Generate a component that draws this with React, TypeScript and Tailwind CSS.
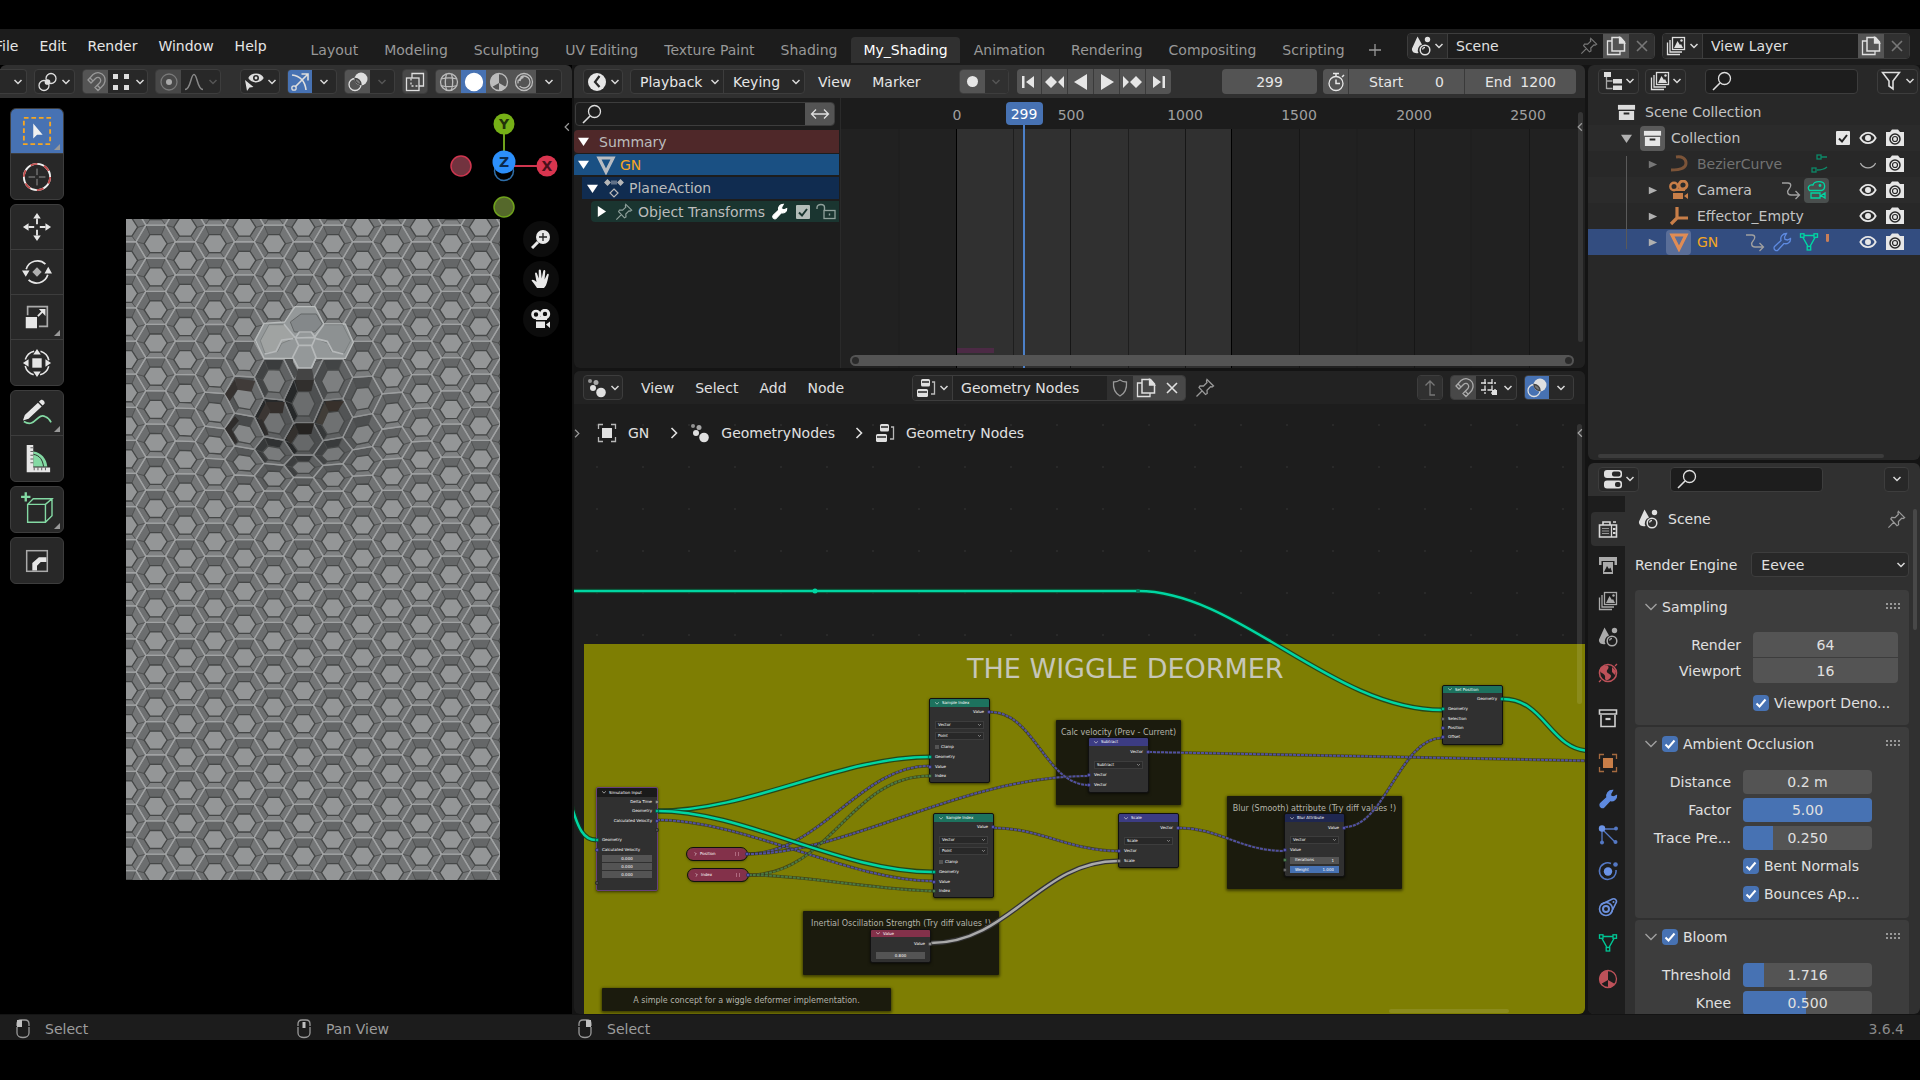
import React from "react";

interface IconProps {
    className?: string;
}

const Svg: React.FC<IconProps & { children: React.ReactNode }> = ({ className = "size-5", children }) => (
    <svg viewBox="0 0 20 20" fill="none" stroke="currentColor" strokeWidth="1.3" className={`shrink-0 ${className}`}>
        {children}
    </svg>
);

/* ---------- Icons ---------- */

const Chevron = ({ className = "text-[#d9d9d9]" }: IconProps) => (
    <svg viewBox="0 0 10 6" fill="none" stroke="currentColor" strokeWidth="1.5" className={`h-[6px] w-[10px] shrink-0 ${className}`}>
        <path d="M1.5 1l3.5 3.5L8.5 1" />
    </svg>
);
const Angle = ({ className = "h-3 w-2" }: IconProps) => (
    <svg viewBox="0 0 8 12" fill="none" stroke="currentColor" strokeWidth="1.6" className={`shrink-0 ${className}`}>
        <path d="M1.5 1l5 5-5 5" />
    </svg>
);
const SearchIcon = () => (
    <Svg>
        <circle cx="12.5" cy="7.5" r="6" />
        <path d="M8 12l-7 7" strokeWidth="1.6" />
    </Svg>
);
const PinIcon = ({ className }: IconProps) => (
    <Svg className={className}>
        <path d="M12 1.5l6.5 6.5-1.5 1-1.5-.3-3.5 3.5.2 3.3-1.7 1L4 9.500l1-1.700 3.500.2L12 4.500l-.5-1.500zM7 13l-5.500 5.500" />
    </Svg>
);
const CopyIcon = () => (
    <Svg>
        <path d="M6 5H1.500v13.500H14V15" />
        <path d="M6 1.500h8.500L18.500 6v9H6z" strokeWidth="1.500" />
        <path d="M13.500 1.500v5.500h5z" fill="currentColor" />
    </Svg>
);
const CrossIcon = () => (
    <Svg>
        <path d="M5 5l10 10M15 5L5 15" strokeWidth="1.600" />
    </Svg>
);
const SceneIcon = ({ className }: IconProps) => (
    <Svg className={className}>
        <path d="M6.500.5L11 8.500a6 6 0 0 0-3.500 8.500C3 18 .5 15.500 1 12.500z" fill="currentColor" stroke="none" />
        <circle cx="16.500" cy="3.500" r="2.700" fill="currentColor" stroke="none" />
        <circle cx="14" cy="14" r="4.800" strokeWidth="1.500" />
        <path d="M11.500 13.500a2.500 2.500 0 0 1 2.500-2" />
    </Svg>
);
const LayersIcon = ({ className }: IconProps) => (
    <Svg className={className}>
        <rect x="6.500" y="1.500" width="12" height="12" />
        <path d="M8 12l3.500-7 2.500 4 1-1 2 4z" fill="currentColor" stroke="none" />
        <circle cx="15.500" cy="4.500" r="1.200" fill="currentColor" stroke="none" />
        <path d="M4 4v12h12M1.500 6.500v12H14" />
    </Svg>
);
const PivotIcon = () => (
    <Svg>
        <circle cx="13" cy="6.500" r="5" />
        <circle cx="6" cy="13.500" r="5" />
        <circle cx="9.500" cy="10" r="2.200" fill="currentColor" />
    </Svg>
);
const MagnetIcon = () => (
    <Svg>
        <path d="M2 8l5-5.500c4-3 9-2 11 1.500s1 8-2 10.500l-4 4-3-3 4.500-4.500c1.500-1.500 1.500-3 .5-4.500s-3-1.500-4.500 0L5 11z" />
        <path d="M4 6l3 3M11 13l3 3" />
    </Svg>
);
const SnapDots = () => (
    <Svg>
        <g fill="currentColor" stroke="none">
            <rect x="2" y="2" width="5" height="5" />
            <rect x="13" y="2" width="5" height="5" />
            <rect x="2" y="13" width="5" height="5" />
            <rect x="13" y="13" width="5" height="5" />
        </g>
    </Svg>
);
const ProportionalIcon = () => (
    <Svg>
        <circle cx="10" cy="10" r="8" opacity=".5" />
        <circle cx="10" cy="10" r="3" fill="currentColor" stroke="none" />
    </Svg>
);
const FalloffIcon = () => (
    <Svg>
        <path d="M1 17.500c6 0 5.500-15 9-15s3 15 9 15" strokeWidth="1.500" />
    </Svg>
);
const VisibilityIcon = () => (
    <Svg>
        <path d="M5 6c3-5 11-5 14 0-3 5-11 5-14 0z" fill="currentColor" />
        <circle cx="12" cy="6" r="3" fill="#282828" stroke="none" />
        <circle cx="12" cy="6" r="1.400" fill="currentColor" stroke="none" />
        <path d="M1 8l2 11 2.500-3.500 4-.5z" fill="currentColor" stroke="none" />
    </Svg>
);
const GizmoIcon = () => (
    <Svg>
        <path d="M2 3c8 1 13 6 14 15M5 15L17.500 2.500M11.500 2h6.500v6.500" strokeWidth="1.600" />
        <circle cx="4" cy="16" r="2.200" />
    </Svg>
);
const OverlayIcon = () => (
    <Svg>
        <circle cx="13" cy="7" r="6.500" fill="currentColor" stroke="none" />
        <circle cx="7" cy="12.500" r="6" />
        <path d="M7 6.500a6 6 0 0 1 6 6 6 6 0 0 1-6-6z" fill="#777" stroke="#444" />
    </Svg>
);
const XrayIcon = () => (
    <Svg>
        <path d="M7 6V1.500h11.500V14H14" />
        <rect x="1.500" y="6" width="12.500" height="12.500" />
        <path d="M6 6.500V14h7.500" strokeDasharray="2 2" />
    </Svg>
);
const WireIcon = () => (
    <Svg>
        <circle cx="10" cy="10" r="8.500" />
        <path d="M2 7c5-1.500 11-1.500 16 0M2 13.500c5 1.500 11 1.500 16 0M7.500 2c-1.500 5-1.500 11 0 16M12.500 2c1.500 5 1.500 11 0 16" />
    </Svg>
);
const SolidIcon = () => (
    <Svg>
        <circle cx="10" cy="10" r="8.500" fill="currentColor" />
    </Svg>
);
const MaterialIcon = ({ className }: IconProps) => (
    <Svg className={className}>
        <circle cx="10" cy="10" r="8.500" />
        <path d="M10 1.500A8.500 8.500 0 0 0 3 15l7-4zM10 11l7 4a8.500 8.500 0 0 1-7 3.500z" fill="currentColor" stroke="none" />
    </Svg>
);
const RenderedIcon = () => (
    <Svg>
        <circle cx="10" cy="10" r="8.500" />
        <circle cx="10" cy="10" r="6" strokeDasharray="14 3 4 3" />
        <path d="M5.500 9a5 5 0 0 1 4-4" strokeWidth="2" />
    </Svg>
);
const ClockIcon = () => (
    <Svg>
        <circle cx="10" cy="10" r="9" fill="currentColor" stroke="none" />
        <path d="M12.500 4L8 10l4.500 5" stroke="#282828" strokeWidth="2.200" />
    </Svg>
);
const StopwatchIcon = () => (
    <Svg>
        <circle cx="10" cy="11.500" r="7" />
        <path d="M10 4.500V1.500M7 1.500h6M16 5l2-2M10 7.500v4h4" strokeWidth="1.500" />
    </Svg>
);
const MeshIcon = ({ className }: IconProps) => (
    <Svg className={className}>
        <path d="M3 3h14l-7 14z" strokeWidth="3.200" />
    </Svg>
);
const MeshDataIcon = ({ className }: IconProps) => (
    <Svg className={className}>
        <path d="M5 3.500h10M4 5.500l5 9M16 5.500l-5 9" strokeWidth="1.500" />
        <rect x="1.500" y="1.800" width="3.500" height="3.500" />
        <rect x="15" y="1.800" width="3.500" height="3.500" />
        <rect x="8.200" y="14.500" width="3.500" height="3.500" />
    </Svg>
);
const ActionIcon = () => (
    <Svg className="size-5 text-[#b8b8b8]">
        <path d="M1 4.500L3.500 2 6 4.500 3.500 7zM14 4.500L16.500 2 19 4.500 16.500 7z" fill="currentColor" />
        <path d="M7 2.500h6v4H7z" fill="#5f7088" stroke="none" />
        <path d="M10 11l4 4-4 4-4-4z" strokeWidth="1.200" />
    </Svg>
);
const WrenchIcon = ({ className }: IconProps) => (
    <Svg className={className}>
        <path d="M18.500 6.500c.4 3.500-3 6-6.500 5l-6 6.500c-1.500 1.500-4 0-4-2 0-.8.300-1.200.800-1.700L9 8.500c-1-3.500 1.500-7 5.500-7L12.500 5l.5 2.500 2.500.5z" fill="currentColor" />
    </Svg>
);
const WrenchOutline = () => (
    <Svg className="size-5 text-[#5e8ae0]">
        <path d="M18.500 6.500c.4 3.500-3 6-6.500 5l-6 6.500c-1.500 1.500-4 0-4-2 0-.8.300-1.200.800-1.700L9 8.500c-1-3.500 1.500-7 5.500-7L12.500 5l.5 2.500 2.500.5z" />
    </Svg>
);
const UnlockIcon = () => (
    <Svg className="size-5 text-[#8fa09b]">
        <rect x="8" y="8.500" width="11" height="8" />
        <path d="M8.500 8V5.500c0-4-7-4-7.500 0V7M13.500 11.500v2" strokeWidth="1.400" />
    </Svg>
);
const ParticlesIcon = () => (
    <Svg>
        <g fill="currentColor" stroke="none">
            <circle cx="3" cy="3" r="2" opacity=".6" />
            <circle cx="9" cy="4.500" r="2.500" opacity=".7" />
            <circle cx="6" cy="10" r="3" />
            <circle cx="14" cy="14.500" r="4.800" />
        </g>
    </Svg>
);
const NodeTreeIcon = () => (
    <Svg>
        <rect x="5" y="1" width="9" height="7.500" rx="1.500" fill="currentColor" stroke="none" />
        <rect x="1" y="11" width="11" height="8" rx="1.500" fill="currentColor" stroke="none" />
        <path d="M6 4h7M2 14h9" stroke="#262626" />
        <path d="M16 4h2.500v12H15" opacity=".8" />
    </Svg>
);
const ObjectIcon = ({ className }: IconProps) => (
    <Svg className={className}>
        <rect x="5" y="5" width="10" height="10" fill="currentColor" stroke="none" />
        <path d="M1.500 6V1.500H6M14 1.500h4.500V6M18.500 14v4.500H14M6 18.500H1.500V14" opacity=".8" />
    </Svg>
);
const ShieldIcon = () => (
    <Svg className="size-5 text-[#999]">
        <path d="M10 2c2 1.500 4 2 6.500 2 .5 6-1 11-6.500 14C4.500 15 3 10 3.500 4 6 4 8 3.500 10 2z" />
    </Svg>
);
const ParentIcon = () => (
    <Svg className="size-5 text-[#777]">
        <path d="M10 3v14h5M5.500 7.500L10 3l4.500 4.500" />
    </Svg>
);
const GridSnapIcon = () => (
    <Svg>
        <path d="M5 1v15M12 1v15M1 5h15M1 12h15" strokeDasharray="5 1.500" />
        <rect x="12" y="12" width="5" height="5" fill="currentColor" stroke="none" />
    </Svg>
);
const OutlinerIcon = () => (
    <Svg>
        <rect x="1" y="1" width="7" height="5" fill="currentColor" stroke="none" />
        <path d="M3.500 6v12M3.500 10h6M3.500 17.500h6" opacity=".7" />
        <rect x="10" y="8" width="9" height="4.500" fill="currentColor" stroke="none" />
        <rect x="10" y="14.500" width="9" height="4.500" fill="currentColor" stroke="none" />
    </Svg>
);
const FilterIcon = () => (
    <Svg>
        <path d="M1.500 1.500h17L12 10v8l-4-3v-5z" strokeWidth="1.600" />
    </Svg>
);
const CollectionIcon = ({ className }: IconProps) => (
    <Svg className={className}>
        <rect x="1" y="2" width="18" height="5" fill="currentColor" stroke="none" />
        <path d="M2 8.500h16V18H2z" fill="currentColor" stroke="none" />
        <path d="M7 11h6" stroke="#282828" strokeWidth="2" />
    </Svg>
);
const BoxOutlineIcon = () => (
    <Svg className="size-[20px] text-[#d0d0d0]">
        <path d="M1.500 2h17v4h-17zM3 7v11.500h14V7" strokeWidth="1.600" />
        <path d="M7.500 11h5" strokeWidth="2.200" />
    </Svg>
);
const CurveIcon = () => (
    <Svg className="size-5 text-[#7c5438]">
        <path d="M7 3c6-1 10 1.500 10 6 0 5-6 7-15 7" strokeWidth="3" />
    </Svg>
);
const CurveDataIcon = () => (
    <Svg className="size-5 text-[#0c8a69]">
        <rect x="6" y="1" width="4" height="4" />
        <path d="M10 3h6M6 16c4 0 7-.5 10-3" />
        <rect x="1" y="14" width="4" height="4" />
    </Svg>
);
const CameraObIcon = ({ className }: IconProps) => (
    <Svg className={className}>
        <circle cx="5" cy="6.500" r="3.700" strokeWidth="2.400" />
        <circle cx="14" cy="5" r="4" strokeWidth="2.800" />
        <path d="M4 9l12-1v3H4zM4 13h10v6H4zM15 16l4-3v6z" fill="currentColor" stroke="none" />
    </Svg>
);
const CameraDataIcon = () => (
    <Svg className="size-5 text-[#00d6a3]">
        <path d="M2.500 10.500C0 8 2 4 6 5c1-4.500 11-4.500 11.500 0 .5 3-1 5-3 5.500zM4 13h9v5H4zM14 15.500l4-2.500v5z" />
        <circle cx="13" cy="5.500" r=".8" fill="currentColor" />
    </Svg>
);
const EmptyIcon = () => (
    <Svg className="size-5 text-[#c87e48]">
        <path d="M8 1v11M8 12h11M8 12l-6 6" strokeWidth="3.200" />
    </Svg>
);
const AnimIcon = () => (
    <Svg className="size-5 text-[#a0a0a0]">
        <path d="M1 3h6c4 0 3 4 1 6s-2 6 2 6h8M14.500 11l4 4-4 4" />
    </Svg>
);
const EyeIcon = () => (
    <Svg className="size-[18px]">
        <path d="M1.500 10c4-7.500 13-7.500 17 0-4 7.500-13 7.500-17 0z" strokeWidth="2" />
        <circle cx="10" cy="10" r="3.300" fill="currentColor" stroke="none" />
    </Svg>
);
const EyeShutIcon = () => (
    <Svg className="size-[18px] text-[#b0b0b0]">
        <path d="M1.500 9c4 7 13 7 17 0" />
    </Svg>
);
const PhotoIcon = () => (
    <Svg className="size-5">
        <path d="M1 4h4l2-2.500h6L15 4h4v14H1z" fill="currentColor" stroke="none" />
        <circle cx="10" cy="11" r="5" stroke="#282828" strokeWidth="1.500" />
        <circle cx="10" cy="11" r="2.500" stroke="#282828" strokeWidth="1.200" />
    </Svg>
);
const PropsIcon = () => (
    <Svg>
        <rect x="1" y="1" width="18" height="8" rx="3" fill="currentColor" stroke="none" />
        <rect x="1" y="11.500" width="18" height="8" rx="3" fill="currentColor" stroke="none" />
        <rect x="9" y="2.500" width="8.500" height="5" rx="2" fill="#282828" stroke="none" />
        <rect x="12" y="13" width="5.500" height="5" rx="2" fill="#282828" stroke="none" />
    </Svg>
);
const RenderTab = () => (
    <Svg className="size-5 text-[#d8d8d8]">
        <path d="M1.500 6h17v12h-17zM5 6V3h7v3" strokeWidth="1.600" />
        <path d="M4 9.500h7M4 12h7M4 14.500h7" strokeWidth="1" opacity=".6" />
        <path d="M15 3h3M13.500 6v12" />
        <path d="M15 10h2.500M15 14h2.500" strokeWidth="2" />
    </Svg>
);
const OutputTab = () => (
    <Svg className="size-5 text-[#aaa]">
        <path d="M1 2h18v8h-2.500V6h-13v4H1z" fill="currentColor" stroke="none" />
        <path d="M5 7h10v12H5z" fill="currentColor" stroke="none" />
        <path d="M6 17l3-6 2 3 1.500-1.500L14 17z" fill="#1d1d1d" stroke="none" />
    </Svg>
);
const WorldTab = () => (
    <Svg className="size-5 text-[#bd5159]">
        <circle cx="10" cy="10" r="8.500" strokeWidth="1.600" />
        <path d="M2 5c4-3 8-3 8.500-1S8 7 9 9s4 2 4 4-3 5-5 4 0-3-1.500-5S2 10 2 7zM14 4l4 4-1 4-3-3z" fill="currentColor" stroke="none" />
        <path d="M17 3l2-2M1 19l2-2" />
    </Svg>
);
const ParticleTab = () => (
    <Svg className="size-5 text-[#5478c4]">
        <path d="M4 4h14M4 4v14M4 4l13 13" />
        <circle cx="4" cy="3.500" r="3.200" fill="#6b93e6" stroke="none" />
        <g fill="currentColor" stroke="none">
            <circle cx="18" cy="3.500" r="2" />
            <circle cx="4" cy="17.500" r="2" />
            <circle cx="17.500" cy="17" r="2" />
        </g>
    </Svg>
);
const PhysicsTab = () => (
    <Svg className="size-5 text-[#5478c4]">
        <path d="M13 2.500A8.300 8.300 0 1 0 18 9" strokeWidth="1.600" />
        <circle cx="10" cy="10.500" r="4.200" fill="#6b93e6" stroke="none" />
        <circle cx="17.500" cy="3.500" r="2.300" fill="currentColor" stroke="none" />
    </Svg>
);
const ConstraintTab = () => (
    <Svg className="size-5 text-[#6b8fdc]">
        <path d="M3 7.500L14.500 2c2.500-1 5 1.500 3.500 4l-5 10" strokeWidth="1.600" />
        <circle cx="8" cy="12" r="6.500" strokeWidth="1.600" />
        <circle cx="8" cy="12" r="3" strokeWidth="2" />
        <circle cx="15.500" cy="5" r="1" fill="currentColor" stroke="none" />
    </Svg>
);

/* ---------- Shared controls ---------- */

const Btn: React.FC<{ className?: string; label: string; children: React.ReactNode }> = ({ className = "", label, children }) => (
    <button type="button" aria-label={label} className={`flex h-full items-center justify-center ${className}`}>
        {children}
    </button>
);

const Group: React.FC<{ className?: string; children: React.ReactNode }> = ({ className = "", children }) => (
    <div className={`flex h-[25px] shrink-0 overflow-hidden rounded border border-[#3d3d3d] bg-[#282828] ${className}`}>{children}</div>
);

const Search: React.FC<{ className: string; label: string }> = ({ className, label }) => (
    <label className={`flex h-[25px] items-center rounded border border-[#3d3d3d] bg-[#1d1d1d] pl-1.5 ${className}`}>
        <SearchIcon />
        <input type="text" aria-label={label} className="min-w-0 flex-1 bg-transparent px-1 outline-none" />
    </label>
);

const Check: React.FC<{ label: string }> = ({ label }) => (
    <label className="flex items-center gap-[5px]">
        <span className="relative flex size-4">
            <input type="checkbox" defaultChecked className="size-4 appearance-none rounded-sm bg-[#4772b3]" />
            <svg viewBox="0 0 16 16" className="pointer-events-none absolute inset-0" fill="none" stroke="#fff" strokeWidth="2">
                <path d="M3.500 8.500l3 3 6-7" />
            </svg>
        </span>
        {label}
    </label>
);

/* ---------- Top bar ---------- */

const menus = ["File", "Edit", "Render", "Window", "Help"];
const workspaces = ["Layout", "Modeling", "Sculpting", "UV Editing", "Texture Paint", "Shading", "My_Shading", "Animation", "Rendering", "Compositing", "Scripting"];

const DataBlock: React.FC<{ icon: React.ReactNode; value: string; pin?: boolean }> = ({ icon, value, pin }) => (
    <div className="flex h-[26px] overflow-hidden rounded border border-[#3d3d3d] bg-[#1d1d1d]">
        <Btn label={`Browse ${value}`} className="w-[40px] gap-[3px] border-r border-[#3d3d3d] bg-[#282828]">
            {icon}
            <Chevron />
        </Btn>
        <input aria-label={value} defaultValue={value} className={`bg-transparent pl-2 outline-none ${pin ? "w-[126px]" : "w-[155px]"}`} />
        {pin && (
            <Btn label="Pin" className="w-[29px] text-[#777]">
                <PinIcon className="size-[18px]" />
            </Btn>
        )}
        <Btn label={`New ${value}`} className="w-[26px] bg-[#545454]">
            <CopyIcon />
        </Btn>
        <Btn label={`Remove ${value}`} className="w-[25px] bg-[#303030] text-[#777]">
            <CrossIcon />
        </Btn>
    </div>
);

const TopBar = () => (
    <header className="flex h-9 shrink-0 bg-[#1c1c1c]">
        <nav className="-ml-[15px] flex h-[34px] items-center gap-px text-[#e6e6e6]">
            {menus.map((m) => (
                <button key={m} type="button" className="px-[10px]">
                    {m}
                </button>
            ))}
        </nav>
        <div className="ml-[22px] flex items-end gap-[2px] pb-[2px] text-[#989898]">
            {workspaces.map((w) => (
                <button key={w} type="button" className={`h-[26px] rounded-t px-3 ${w === "My_Shading" ? "bg-[#303030] text-white" : ""}`}>
                    {w}
                </button>
            ))}
            <button type="button" aria-label="Add workspace" className="flex h-[26px] w-8 items-center justify-center">
                <svg viewBox="0 0 12 12" className="size-3" stroke="#999" strokeWidth="1.300">
                    <path d="M6 0v12M0 6h12" />
                </svg>
            </button>
        </div>
        <div className="mr-[10px] ml-auto flex items-center gap-[7px] pb-[2px] text-[#e0e0e0]">
            <DataBlock icon={<SceneIcon />} value="Scene" pin />
            <DataBlock icon={<LayersIcon />} value="View Layer" />
        </div>
    </header>
);

/* ---------- 3D viewport ---------- */

const tone = (v: number) => `rgb(${Math.round(v)},${Math.round(v + 2)},${Math.round(v + 3)})`;
const gauss = (x: number, y: number, cx: number, cy: number, sx: number, sy: number) =>
    Math.exp(-((x - cx) ** 2) / (2 * sx * sx) - (y - cy) ** 2 / (2 * sy * sy));
const push = (x: number, y: number) => [x, y + 18 * gauss(x, y, 179, 203, 50, 30)];
const faceTone = [116, 128, 110, 108, 101, 116];

const HexMesh = () => {
    const faces: React.ReactNode[] = [];
    const ridges: React.ReactNode[] = [];
    for (let k = -1; k <= 12; k++) {
        for (let r = -1; r <= 20; r++) {
            const cx = 29.7 + 29.55 * k;
            const cy = 22.7 + 33.1 * r + (k % 2 ? 16.6 : 0);
            const ring = (rx: number, ry: number, dy: number) =>
                [0, 1, 2, 3, 4, 5].map((i) => push(cx + rx * Math.cos((i * Math.PI) / 3), cy + dy + ry * Math.sin((i * Math.PI) / 3)));
            const outer = ring(19.7, 19.1, 0);
            const inner = ring(11.5, 10.4, 2);
            const dark = gauss(cx, cy, 179, 193, 40, 38) * 74;
            const leftBias = cx < 190 ? 1.3 : 1;
            const key = `${k}.${r}`;
            faces.push(
                <g key={key}>
                    {faceTone.map((f, i) => {
                        const j = (i + 1) % 6;
                        const d = i > 1 && i < 5 ? dark * leftBias : dark * 0.6;
                        return <polygon key={i} points={`${outer[i]} ${outer[j]} ${inner[j]} ${inner[i]}`} fill={tone(Math.max(38, f - d))} stroke="#4c4e4e" strokeWidth=".7" />;
                    })}
                    <polygon points={inner.join(" ")} fill={tone(148 - dark * 0.65)} stroke="#464848" strokeWidth="1.3" />
                </g>
            );
            ridges.push(<polygon key={key} points={outer.join(" ")} fill="none" stroke={tone(160 - dark * 0.5)} strokeWidth="1.3" />);
        }
    }
    return (
        <svg viewBox="0 0 374 661" className="absolute top-[154px] left-[126px] h-[661px] w-[374px] bg-[#777]">
            {faces}
            {ridges}
            <g transform="translate(-6 -9) scale(.33333)" strokeLinejoin="round">
                <path d="M525 290h60l27 52h64l24 55-24 48h-88l-14 30h-38l-16-30h-88l-26-55 26-50 62-4z" fill="#949899" stroke="#b9bcbc" strokeWidth="4" />
                <path d="M543 312h46l18 30-22 24h-62l-12-30z" fill="#84888a" stroke="#626566" strokeWidth="3" />
                <path d="M495 344l30 40-40 16-12 24-38 6-14-38 26-48z" fill="#a0a3a2" stroke="#707474" strokeWidth="2" />
                <path d="M610 344l-26 40 40 16 10 24 38 6 20-38-24-48z" fill="#8d9192" stroke="#707474" strokeWidth="2" />
                <path d="M492 342l34 42 58-2 28-40M520 386l-35 4-17 34-34 8M588 386l34 8 16 30 32 8M526 384l12-18h36l12 18-10 22h-40zM536 406l-18 36 16 32h40l14-32-14-36z" fill="none" stroke="#b6b9ba" strokeWidth="5" />
                <path d="M534 476h42l6 34h-56z" fill="#444" />
                <path d="M526 510h56l-8 34h-40z" fill="#312f2d" />
                <path d="M346 505l60 8-12 32-42-6z" fill="#403b39" />
                <path d="M345 508l-30 44 14 22 24-36z" fill="#363230" />
                <path d="M438 576h56l-6 34h-38z" fill="#332e2b" />
                <path d="M438 578l-24 46 16 14 22-34z" fill="#3b3633" />
                <path d="M616 574h56l-20 30h-30z" fill="#37302b" />
                <path d="M614 578l-26 60 20 6 18-40z" fill="#413d38" />
                <path d="M526 640h56l-8 32h-36z" fill="#252321" />
                <path d="M524 644l-26 40 14 18 24-36z" fill="#33302d" />
                <path d="M345 618l-30 38 30 46 8-6-18-38 22-26zM412 630l24 46 10-2-20-46z" fill="#2f2d2c" />
            </g>
        </svg>
    );
};

const tools: { name: string; icon: React.ReactNode; active?: boolean; more?: boolean }[][] = [
    [
        {
            name: "Select Box",
            active: true,
            more: true,
            icon: (
                <>
                    <rect x="2" y="2" width="28" height="28" stroke="#f5a623" strokeDasharray="5 3" strokeWidth="2" />
                    <path d="M12 8v16l4-4h6z" fill="#f0f0f0" stroke="none" />
                </>
            ),
        },
        {
            name: "Cursor",
            icon: (
                <>
                    <circle cx="16" cy="16" r="14" stroke="#f0f0f0" strokeWidth="2" />
                    <circle cx="16" cy="16" r="14" stroke="#c04a4a" strokeDasharray="7.330 7.330" strokeWidth="2" />
                    <path d="M16 7v7M16 18v7M7 16h7M18 16h7" stroke="#999" />
                </>
            ),
        },
    ],
    [
        {
            name: "Move",
            icon: (
                <>
                    <path d="M16 7v6M16 19v6M7 16h6M19 16h6" strokeWidth="2" />
                    <path d="M16 1l4 6h-8zM16 31l4-6h-8zM1 16l6-4v8zM31 16l-6-4v8z" fill="currentColor" stroke="none" />
                </>
            ),
        },
        {
            name: "Rotate",
            icon: (
                <>
                    <path d="M4.500 13A12.500 12.500 0 0 1 25 7.500M27.500 19A12.500 12.500 0 0 1 7 24.500" strokeWidth="1.800" />
                    <path d="M16 11l5 5-5 5-5-5z" fill="#b0b0b0" stroke="none" />
                    <path d="M0 14.500h8L4 21zM24 17.500h8L28 10.500z" fill="currentColor" stroke="none" />
                </>
            ),
        },
        {
            name: "Scale",
            more: true,
            icon: (
                <>
                    <path d="M6 14V5h21v21h-9" stroke="#aaa" strokeWidth="1.800" />
                    <rect x="4" y="16" width="12" height="12" fill="currentColor" stroke="none" />
                    <path d="M17 15l6-6" strokeWidth="2" />
                    <path d="M18 7.500h7V15z" fill="currentColor" stroke="none" />
                </>
            ),
        },
        {
            name: "Transform",
            icon: (
                <>
                    <circle cx="16" cy="16" r="13" strokeDasharray="13.400 7" strokeDashoffset="-3.500" strokeWidth="1.600" />
                    <rect x="11" y="11" width="10" height="10" fill="currentColor" stroke="none" />
                    <path d="M16 1l4 6h-8zM16 31l4-6h-8zM1 16l6-4v8zM31 16l-6-4v8z" fill="currentColor" stroke="none" />
                </>
            ),
        },
    ],
    [
        {
            name: "Annotate",
            more: true,
            icon: (
                <>
                    <path d="M2 25c12 8 14-10 23-5 3 1 5 4 6 6" stroke="#83d9a3" strokeWidth="1.800" />
                    <path d="M1 24l2-6L17 5l4 4L7 22zM18 4l2-2c2-1 5 2 4 4l-2 2z" fill="currentColor" stroke="none" />
                </>
            ),
        },
        {
            name: "Measure",
            icon: (
                <>
                    <path d="M12 8c9 1 14 8 15 16H12z" fill="#83d9a3" stroke="none" />
                    <path d="M12 11c7 1 10 6 11 13" stroke="#282828" />
                    <path d="M5 1h7v24h18v5H5z" fill="currentColor" stroke="none" />
                    <path d="M9 4h3M9 8h3M9 12h3M9 16h3M9 20h3M13 25v3M17 25v3M21 25v3M25 25v3" stroke="#555" />
                </>
            ),
        },
    ],
    [
        {
            name: "Add Cube",
            more: true,
            icon: (
                <g stroke="#83d9a3">
                    <path d="M6 10h19v19H6zM6 10l6-6h20l-7 6M32 4v18l-7 7" strokeWidth="1.500" />
                    <path d="M4-3V7M-1 2h10" strokeWidth="2.500" />
                </g>
            ),
        },
    ],
    [
        {
            name: "Bevel",
            icon: (
                <>
                    <rect x="5" y="5" width="22" height="22" stroke="#aaa" strokeWidth="1.600" />
                    <path d="M11 26v-8l7-6h8v5h-6l-4 4v5z" fill="currentColor" stroke="none" />
                </>
            ),
        },
    ],
];

const Viewport = () => (
    <section className="relative flex min-w-0 flex-col overflow-hidden bg-black text-[#dedede]">
        <div className="flex h-[33px] shrink-0 items-center gap-[7px] rounded-t-md bg-[#303030] pr-[10px]">
            <Group className="w-[27px] rounded-l-none border-l-0">
                <Btn label="Orientation" className="w-full pl-2.5"><Chevron /></Btn>
            </Group>
            <Group className="w-[41px]">
                <Btn label="Pivot point" className="w-full gap-[3px]"><PivotIcon /><Chevron /></Btn>
            </Group>
            <Group className="w-[66px]">
                <Btn label="Snap" className="w-[25px] bg-[#545454] text-[#999]"><MagnetIcon /></Btn>
                <Btn label="Snap to" className="flex-1 gap-1"><SnapDots /><Chevron /></Btn>
            </Group>
            <Group className="w-[66px]">
                <Btn label="Proportional editing" className="w-[25px] bg-[#484848] text-[#aaa]"><ProportionalIcon /></Btn>
                <Btn label="Falloff" className="flex-1 gap-1 text-[#888]"><FalloffIcon /><Chevron className="text-[#555]" /></Btn>
            </Group>
            <Group className="ml-auto w-[40px]">
                <Btn label="Visibility" className="w-full gap-[3px]"><VisibilityIcon /><Chevron /></Btn>
            </Group>
            <Group className="w-[50px]">
                <Btn label="Gizmos" className="w-[24px] bg-[#4772b3]"><GizmoIcon /></Btn>
                <Btn label="Gizmo options" className="flex-1"><Chevron /></Btn>
            </Group>
            <Group className="w-[51px]">
                <Btn label="Overlays" className="w-[25px] bg-[#545454]"><OverlayIcon /></Btn>
                <Btn label="Overlay options" className="flex-1"><Chevron className="text-[#555]" /></Btn>
            </Group>
            <Group className="w-[26px]">
                <Btn label="X-ray" className="w-full bg-[#484848]"><XrayIcon /></Btn>
            </Group>
            <Group className="w-[127px]">
                <Btn label="Wireframe" className="w-[25px] bg-[#545454] text-[#bbb]"><WireIcon /></Btn>
                <Btn label="Solid" className="w-[25px] bg-[#4772b3] text-white"><SolidIcon /></Btn>
                <Btn label="Material preview" className="w-[25px] bg-[#545454] text-[#bbb]"><MaterialIcon /></Btn>
                <Btn label="Rendered" className="w-[25px] bg-[#545454] text-[#bbb]"><RenderedIcon /></Btn>
                <Btn label="Shading options" className="flex-1"><Chevron /></Btn>
            </Group>
        </div>
        <HexMesh />
        <div className="mt-[10px] ml-[10px] flex w-[54px] flex-col gap-1">
            {tools.map((group, g) => (
                <div key={g} className="divide-y divide-[#3d3d3d] overflow-hidden rounded-md border border-[#3d3d3d] bg-[#282828]">
                    {group.map((t) => (
                        <button key={t.name} type="button" aria-label={t.name} className={`relative flex h-[45px] w-full items-center justify-center text-[#e6e6e6] ${t.active ? "bg-[#4772b3]" : ""}`}>
                            <svg viewBox="0 0 32 32" fill="none" stroke="currentColor" className="size-[30px] overflow-visible">
                                {t.icon}
                            </svg>
                            {t.more && (
                                <svg viewBox="0 0 6 6" className="absolute right-[3px] bottom-[3px] size-[6px]" fill="#999">
                                    <path d="M6 0v6H0z" />
                                </svg>
                            )}
                        </button>
                    ))}
                </div>
            ))}
        </div>
        <svg viewBox="0 0 110 120" className="absolute top-[33px] right-[12px] h-[120px] w-[110px]" fontSize="14" fontWeight="bold" textAnchor="middle">
            <path d="M54 24v30" stroke="#6fa21c" strokeWidth="2" />
            <path d="M60 68h32" stroke="#cf364f" strokeWidth="2" />
            <circle cx="54" cy="73" r="9.500" fill="none" stroke="#2f6ea8" strokeWidth="1.500" />
            <circle cx="11" cy="68" r="10" fill="#72333f" stroke="#cf364f" strokeWidth="1.500" />
            <circle cx="54" cy="109" r="10" fill="#55682b" stroke="#6fa21c" strokeWidth="1.500" />
            <circle cx="54" cy="26" r="10.500" fill="#76b017" />
            <circle cx="97" cy="68" r="10.500" fill="#d9354f" />
            <circle cx="54" cy="64" r="11.500" fill="#2c8ffb" />
            <text x="54" y="31" fill="#22330a">Y</text>
            <text x="54" y="69" fill="#0b2a4c">Z</text>
            <text x="97" y="73" fill="#4a101b">X</text>
        </svg>
        <div className="absolute top-[156px] right-[13px] flex flex-col gap-1 text-[#e8e8e8]">
            {[
                <g key="z">
                    <circle cx="12" cy="8" r="7" fill="currentColor" stroke="none" />
                    <path d="M12 4v8M8 8h8" stroke="#222" />
                    <path d="M7 13l-6 6" strokeWidth="3" />
                </g>,
                <path key="h" d="M6 19c-2-3-4-6-5.500-7.500.7-1.300 2.500-.8 5 1.500L4 4.500c.3-1.200 1.600-1.200 2 0L7.800 9.500 7.700 1.500c.3-1.300 2-1.300 2.200 0l.8 8 1.600-7.700c.4-1.200 2-1 2 .4l-.7 8.200 2.400-5c.6-1 2-.5 1.700.8-1 4-1.600 10-4.700 12.800z" fill="currentColor" stroke="none" />,
                <g key="c">
                    <circle cx="5" cy="5.500" r="3.500" strokeWidth="2.600" />
                    <circle cx="14" cy="5" r="3.700" strokeWidth="3" />
                    <path d="M5 8l11-1v4H5zM5 12.500h9V19H5zM15 15.500l4-3V19z" fill="currentColor" stroke="none" />
                </g>,
            ].map((shape, i) => (
                <button key={i} type="button" aria-label={["Zoom", "Pan", "Camera view"][i]} className="flex size-9 items-center justify-center rounded-full bg-[#0c0c0c]">
                    <Svg>{shape}</Svg>
                </button>
            ))}
        </div>
        <button type="button" aria-label="Show sidebar" className="absolute top-[56px] right-[2px] flex h-3 w-3 rotate-180 items-center text-[#999]">
            <Angle className="h-[10px] w-[6px]" />
        </button>
    </section>
);

/* ---------- Dope sheet ---------- */

const transport: { name: string; d: string }[] = [
    { name: "Jump to start", d: "M3 4h2.500v12H3zM15 4v12L7 10z" },
    { name: "Previous keyframe", d: "M0 10l6-6 6 6-6 6zM19 4v12l-6-6z" },
    { name: "Play reverse", d: "M16 2v16L3 10z" },
    { name: "Play", d: "M4 2v16l13-8z" },
    { name: "Next keyframe", d: "M8 10l6-6 6 6-6 6zM1 4v12l6-6z" },
    { name: "Jump to end", d: "M14.500 4H17v12h-2.500zM5 4v12l8-6z" },
];

const Tri: React.FC<{ open?: boolean; className?: string }> = ({ open, className = "text-white" }) => (
    <svg viewBox="0 0 12 12" fill="currentColor" className={`size-[11px] shrink-0 ${className}`}>
        <path d={open ? "M0 2h12l-6 9z" : "M2 0v12l9-6z"} />
    </svg>
);

const SmallTri = ({ className }: IconProps) => (
    <svg viewBox="0 0 12 12" fill="currentColor" className={`size-[11px] shrink-0 ${className}`}>
        <path d="M2 2v8l9-4z" />
    </svg>
);

const DopeSheet = () => (
    <section className="flex h-[303px] shrink-0 flex-col overflow-hidden rounded-md bg-[#1d1d1d]">
        <div className="flex h-[33px] shrink-0 items-center bg-[#303030] px-[9px] text-[#e6e6e6]">
            <Group className="w-[40px]">
                <Btn label="Editor type" className="w-full gap-[3px]"><ClockIcon /><Chevron /></Btn>
            </Group>
            <Group className="ml-[7px] w-[175px]">
                <button type="button" className="flex w-[93px] items-center justify-between border-r border-[#3d3d3d] pr-[3px] pl-[9px]">Playback<Chevron /></button>
                <button type="button" className="flex flex-1 items-center justify-between pr-[3px] pl-[9px]">Keying<Chevron /></button>
            </Group>
            <button type="button" className="ml-[3px] px-[10px]">View</button>
            <button type="button" className="ml-px px-[10px]">Marker</button>
            <Group className="ml-[28px] w-[50px]">
                <Btn label="Auto keying" className="w-[25px] bg-[#545454]"><span className="size-[11px] rounded-full bg-[#e6e6e6]" /></Btn>
                <Btn label="Auto keying options" className="flex-1 bg-[#303030]"><Chevron className="text-[#555]" /></Btn>
            </Group>
            <div className="ml-2 flex h-[25px] w-[154px] gap-px overflow-hidden rounded bg-[#3a3a3a]">
                {transport.map((t) => (
                    <Btn key={t.name} label={t.name} className="flex-1 bg-[#545454]">
                        <svg viewBox="0 0 20 20" fill="currentColor" className="size-5"><path d={t.d} /></svg>
                    </Btn>
                ))}
            </div>
            <input aria-label="Current frame" defaultValue="299" className="ml-auto h-[25px] w-[95px] rounded bg-[#545454] text-center" />
            <div className="ml-[6px] flex h-[25px] gap-px overflow-hidden rounded bg-[#3a3a3a]">
                <Btn label="Use preview range" className="w-[25px] bg-[#545454]"><StopwatchIcon /></Btn>
                <label className="flex w-[115px] items-center justify-between bg-[#545454] px-[20px]">
                    Start
                    <input defaultValue="0" className="w-8 bg-transparent text-right" />
                </label>
                <label className="flex w-[111px] items-center justify-between bg-[#545454] px-[20px]">
                    End
                    <input defaultValue="1200" className="w-10 bg-transparent text-right" />
                </label>
            </div>
        </div>
        <div className="flex min-h-0 flex-1">
            <div className="flex w-[267px] shrink-0 flex-col border-r border-[#2a2a2a] pt-[4px] text-[#bcbcbc]">
                <div className="mb-[4px] ml-px flex h-6 w-[260px] overflow-hidden rounded border border-[#3d3d3d]">
                    <label className="flex flex-1 items-center pl-1.5 text-[#dedede]">
                        <SearchIcon />
                        <input aria-label="Filter channels" className="min-w-0 flex-1 bg-transparent outline-none" />
                    </label>
                    <Btn label="Invert" className="w-[29px] bg-[#545454] text-[#dedede]">
                        <Svg><path d="M1.500 10h17M6 5.500L1.500 10 6 14.500M14 5.500l4.500 4.500-4.500 4.500" /></Svg>
                    </Btn>
                </div>
                <div className="mr-px flex flex-col gap-px">
                    <div className="flex h-[23px] items-center rounded-l bg-[#4f2829] pl-[4px]"><Tri open /><span className="ml-[10px]">Summary</span></div>
                    <div className="flex h-[21px] items-center rounded-tl bg-[#1a5083] pl-[4px]">
                        <Tri open />
                        <MeshIcon className="ml-[7px] size-[20px] text-[#b8bcc2]" />
                        <span className="ml-[4px] text-[#f5a623]">GN</span>
                    </div>
                    <div className="mt-px ml-[8px] flex h-[22px] items-center bg-[#102c50] pl-[5px]"><Tri open /><span className="ml-[6px] flex"><ActionIcon /></span><span className="ml-[5px]">PlaneAction</span></div>
                    <div className="mt-px ml-[17px] flex h-[21px] items-center rounded-l bg-[#1a3530] pl-[5px]">
                        <Tri />
                        <PinIcon className="ml-[8px] size-[18px] text-[#8fa09b]" />
                        <span className="ml-[5px] whitespace-nowrap">Object Transforms</span>
                        <WrenchIcon className="ml-[6px] size-[17px] text-white" />
                        <svg viewBox="0 0 14 14" className="ml-[8px] size-[14px] shrink-0"><rect width="14" height="14" rx="1" fill="#b4bdba" /><path d="M3 7.500l3 3 5-6.500" fill="none" stroke="#1a3530" strokeWidth="2" /></svg>
                        <span className="ml-[6px] flex"><UnlockIcon /></span>
                    </div>
                </div>
            </div>
            <div className="relative min-w-0 flex-1 overflow-hidden bg-[#212121]">
                {/* Ruler, playback range and playhead */}
                <svg className="size-full" fontSize="14" textAnchor="middle" fill="#a0a0a0">
                    <rect y="31" x="115" width="275" height="240" fill="#303030" />
                    <rect width="100%" height="31" fill="#1c1c1c" />
                    <path d="M58 31v240M172.500 31v240M287.500 31v240M516 31v240M630 31v240" stroke="#1e1e1e" />
                    <path d="M229.500 31v240M344.500 31v240M458.500 31v240M573.500 31v240M688.500 31v240" stroke="#161616" />
                    <path d="M115.500 31v240M390.500 31v240" stroke="#000" />
                    <rect x="116" y="250" width="37" height="5" fill="#4c2a45" />
                    <path d="M183 27v244" stroke="#4c80c8" strokeWidth="2" />
                    <rect x="165" y="4" width="37" height="23" rx="4" fill="#4772b3" />
                    <text x="183" y="21" fill="#fff">299</text>
                    <text x="116" y="22">0</text>
                    <text x="230" y="22">500</text>
                    <text x="344" y="22">1000</text>
                    <text x="458" y="22">1500</text>
                    <text x="573" y="22">2000</text>
                    <text x="687" y="22">2500</text>
                </svg>
                <div className="absolute right-[11px] bottom-[2px] left-[9px] flex h-[11px] items-center justify-between rounded-full bg-[#545454] px-[2px]">
                    <span className="size-[7px] rounded-full bg-[#2a2a2a]" />
                    <span className="size-[7px] rounded-full bg-[#2a2a2a]" />
                </div>
                <span className="absolute top-[14px] right-[2px] h-[230px] w-[5px] rounded-full bg-[#353535]" />
                <span className="absolute top-[24px] right-[2px] rotate-180 text-[#999]"><Angle className="h-[10px] w-[6px]" /></span>
            </div>
        </div>
    </section>
);

/* ---------- Node editor ---------- */

interface Row {
    h: number;
    kind: "out" | "in" | "select" | "check" | "field" | "gap";
    label?: string;
    value?: string;
    socket?: string;
    fill?: boolean;
}
interface NodeData {
    title: string;
    x: number;
    y: number;
    w: number;
    h: number;
    head: number;
    color: string;
    rows: Row[];
    border?: string;
}

const GEO = "#00d6a3";
const VEC = "#6363c7";
const INT = "#598c5c";
const VAL = "#a1a1a1";

const sampleRows: Row[] = [
    { h: 10, kind: "out", label: "Value", socket: VEC },
    { h: 3, kind: "gap" },
    { h: 10, kind: "select", label: "Vector" },
    { h: 11, kind: "select", label: "Point" },
    { h: 11, kind: "check", label: "Clamp" },
    { h: 10, kind: "in", label: "Geometry", socket: GEO },
    { h: 9, kind: "in", label: "Value", socket: VEC },
    { h: 9, kind: "in", label: "Index", socket: INT },
];

// Coordinates are relative to the canvas corner
const nodes: NodeData[] = [
    {
        title: "Simulation Input", x: 23, y: 384, w: 60, h: 102, head: 9, color: "#1a1a1a", border: "#66407c",
        rows: [
            { h: 9, kind: "out", label: "Delta Time", socket: VAL },
            { h: 10, kind: "out", label: "Geometry", socket: GEO },
            { h: 9, kind: "out", label: "Calculated Velocity", socket: VEC },
            { h: 10, kind: "out", label: "", socket: "#555" },
            { h: 10, kind: "in", label: "Geometry", socket: GEO },
            { h: 9, kind: "in", label: "Calculated Velocity", socket: VEC },
            { h: 8, kind: "field", value: "0.000" },
            { h: 8, kind: "field", value: "0.000" },
            { h: 8, kind: "field", value: "0.000" },
            { h: 9, kind: "in", label: "", socket: "#555" },
        ],
    },
    { title: "Sample Index", x: 356, y: 295, w: 59, h: 83, head: 8, color: "#1d725e", rows: sampleRows },
    { title: "Sample Index", x: 360, y: 410, w: 59, h: 83, head: 8, color: "#1d725e", rows: sampleRows },
    {
        title: "Subtract", x: 515, y: 334, w: 59, h: 54, head: 8, color: "#3c3c83",
        rows: [
            { h: 11, kind: "out", label: "Vector", socket: VEC },
            { h: 3, kind: "gap" },
            { h: 10, kind: "select", label: "Subtract" },
            { h: 10, kind: "in", label: "Vector", socket: VEC },
            { h: 10, kind: "in", label: "Vector", socket: VEC },
        ],
    },
    {
        title: "Scale", x: 545, y: 410, w: 59, h: 53, head: 8, color: "#3c3c83",
        rows: [
            { h: 11, kind: "out", label: "Vector", socket: VEC },
            { h: 3, kind: "gap" },
            { h: 10, kind: "select", label: "Scale" },
            { h: 10, kind: "in", label: "Vector", socket: VEC },
            { h: 10, kind: "in", label: "Scale", socket: VAL },
        ],
    },
    {
        title: "Value", x: 297, y: 526, w: 59, h: 32, head: 7, color: "#83314a",
        rows: [
            { h: 13, kind: "out", label: "Value", socket: VAL },
            { h: 1, kind: "gap" },
            { h: 8, kind: "field", value: "0.800" },
        ],
    },
    {
        title: "Set Position", x: 869, y: 282, w: 59, h: 58, head: 7, color: "#1d725e",
        rows: [
            { h: 11, kind: "out", label: "Geometry", socket: GEO },
            { h: 10, kind: "in", label: "Geometry", socket: GEO },
            { h: 9, kind: "in", label: "Selection", socket: "#777" },
            { h: 9, kind: "in", label: "Position", socket: VEC },
            { h: 9, kind: "in", label: "Offset", socket: VEC },
        ],
    },
    {
        title: "Blur Attribute", x: 711, y: 410, w: 59, h: 62, head: 8, color: "#1f2750",
        rows: [
            { h: 11, kind: "out", label: "Value", socket: VEC },
            { h: 2, kind: "gap" },
            { h: 10, kind: "select", label: "Vector" },
            { h: 10, kind: "in", label: "Value", socket: VEC },
            { h: 10, kind: "field", label: "Iterations", value: "1", socket: INT },
            { h: 9, kind: "field", label: "Weight", value: "1.000", socket: "#777", fill: true },
        ],
    },
];

const Socket: React.FC<{ color: string; right?: boolean }> = ({ color, right }) => (
    <span className={`absolute top-1/2 size-1 -translate-y-1/2 rounded-full border border-black/50 ${right ? "-right-[2px]" : "-left-[2px]"}`} style={{ backgroundColor: color }} />
);

const NodeRow: React.FC<{ row: Row }> = ({ row }) => (
    <div className="relative flex shrink-0 items-center px-[5px]" style={{ height: row.h }}>
        {row.socket && <Socket color={row.socket} right={row.kind === "out"} />}
        {row.kind === "out" && <span className="ml-auto whitespace-nowrap">{row.label}</span>}
        {row.kind === "in" && <span className="whitespace-nowrap">{row.label}</span>}
        {row.kind === "select" && (
            <button type="button" className="flex h-[8px] w-full items-center justify-between border border-[#3d3d3d] bg-[#282828] px-[2px]">
                {row.label}
                <svg viewBox="0 0 6 4" className="h-[2px] w-[3px]" fill="none" stroke="#ccc"><path d="M0 0l3 3 3-3" /></svg>
            </button>
        )}
        {row.kind === "check" && (
            <label className="flex items-center gap-[2px]">
                <input type="checkbox" className="size-[4px] appearance-none bg-[#545454]" />
                {row.label}
            </label>
        )}
        {row.kind === "field" && (
            <label className={`flex h-[7px] w-full items-center px-[5px] ${row.fill ? "bg-[#4772b3]" : "bg-[#545454]"}`}>
                {row.label}
                <input aria-label={row.label ?? "Value"} defaultValue={row.value} className={`h-full min-w-0 flex-1 bg-transparent ${row.label ? "text-right" : "text-center"}`} />
            </label>
        )}
    </div>
);

const NodeBox: React.FC<{ node: NodeData }> = ({ node }) => (
    <div
        className="absolute flex flex-col rounded-[1px] bg-[#303030] text-[4px] leading-none text-white shadow-[0_1px_3px_1px_rgba(0,0,0,0.6)] outline outline-[#111]"
        style={{ left: node.x, top: node.y, width: node.w, height: node.h, outlineColor: node.border }}
    >
        <div className="flex shrink-0 items-center gap-[3px] pl-[5px]" style={{ height: node.head, backgroundColor: node.color }}>
            <svg viewBox="0 0 6 4" className="h-[3px] w-[4px]" fill="none" stroke="#ddd"><path d="M0 0l3 3 3-3" /></svg>
            {node.title}
        </div>
        {node.rows.map((row, i) => (
            <NodeRow key={i} row={row} />
        ))}
    </div>
);

const frames = [
    { label: "Calc velocity (Prev - Current)", x: 482, y: 316, w: 125, h: 85 },
    { label: "Blur (Smooth) attribute (Try diff values !)", x: 653, y: 392, w: 175, h: 93 },
    { label: "Inertial Oscillation Strength (Try diff values !)", x: 229, y: 507, w: 196, h: 64 },
    { label: "A simple concept for a wiggle deformer implementation.", x: 28, y: 584, w: 289, h: 23 },
];

const collapsed = [
    { label: "Position", x: 113, y: 444 },
    { label: "Index", x: 114, y: 465 },
];

const geoLinks = [
    "M570 591H814L1138 591C1238 591 1332 710 1442 710",
    "M1503 699C1545 699 1550 750 1590 751",
    "M570 800C578 830 584 840 596 840",
    "M657 811C750 811 840 757 929 757",
    "M657 811C745 811 840 872 933 872",
];
const fieldLinks = [
    { d: "M657 820C745 820 850 881 933 881", c: "#5151a0" },
    { d: "M747 854C820 854 860 766 929 766", c: "#5151a0" },
    { d: "M747 854C850 854 960 776 1089 776", c: "#5151a0" },
    { d: "M749 875C830 875 850 776 929 776", c: "#4b7a42" },
    { d: "M749 875C800 875 880 890 933 891", c: "#4b7a42" },
    { d: "M990 712C1035 712 1045 785 1089 785", c: "#5151a0" },
    { d: "M994 828C1040 828 1070 851 1118 851", c: "#5151a0" },
    { d: "M1179 828C1220 828 1240 851 1285 851", c: "#5151a0" },
    { d: "M1345 827C1385 827 1400 738 1442 738", c: "#5151a0" },
    { d: "M1149 752L1600 761", c: "#5151a0" },
];

const Links = () => (
    <svg className="absolute inset-0 size-full" fill="none">
        <g transform="translate(-574 -404)">
            {fieldLinks.map((l) => (
                <g key={l.d}>
                    <path d={l.d} stroke="#2c2c20" strokeWidth="3" opacity=".7" />
                    <path d={l.d} stroke={l.c} strokeWidth="2" strokeDasharray="3 1" />
                </g>
            ))}
            {geoLinks.map((d) => (
                <g key={d}>
                    <path d={d} stroke="#0f3a20" strokeWidth="5" opacity=".8" />
                    <path d={d} stroke="#00d6a3" strokeWidth="2.500" />
                </g>
            ))}
            <circle cx="815" cy="591" r="2.500" fill="#00d6a3" />
            <circle cx="1138" cy="591" r="2" fill="#0a7a5e" />
            <path d="M931 943C1010 943 1040 861 1118 861" stroke="#333" strokeWidth="5" />
            <path d="M931 943C1010 943 1040 861 1118 861" stroke="#aaa" strokeWidth="2.500" />
        </g>
    </svg>
);

const NodeEditor = () => (
    <section className="flex min-h-0 flex-1 flex-col overflow-hidden rounded-md bg-[#1d1d1d] text-[#e0e0e0]">
        <div className="flex h-[33px] shrink-0 items-center bg-[#222] px-[9px]">
            <Group className="w-[40px]">
                <Btn label="Editor type" className="w-full gap-[3px]"><ParticlesIcon /><Chevron /></Btn>
            </Group>
            <div className="ml-[8px] flex gap-px">
                {["View", "Select", "Add", "Node"].map((m) => (
                    <button key={m} type="button" className="px-[10px]">{m}</button>
                ))}
            </div>
            <div className="ml-[58px] flex h-[26px] overflow-hidden rounded border border-[#3d3d3d]">
                <Btn label="Browse node tree" className="w-[40px] gap-[3px] border-r border-[#3d3d3d] bg-[#282828]"><NodeTreeIcon /><Chevron /></Btn>
                <input aria-label="Node tree" defaultValue="Geometry Nodes" className="w-[154px] bg-transparent pl-2 outline-none" />
                <Btn label="Fake user" className="w-[26px] bg-[#303030]"><ShieldIcon /></Btn>
                <Btn label="Duplicate" className="w-[26px] bg-[#484848]"><CopyIcon /></Btn>
                <Btn label="Unlink" className="w-[26px] bg-[#484848]"><CrossIcon /></Btn>
            </div>
            <button type="button" aria-label="Pin" className="ml-[9px] text-[#999]"><PinIcon /></button>
            <div className="mr-[2px] ml-auto flex gap-[7px]">
                <Group className="w-[26px]"><Btn label="Parent tree" className="w-full bg-[#303030]"><ParentIcon /></Btn></Group>
                <Group className="w-[67px]">
                    <Btn label="Snap" className="w-[25px] bg-[#484848] text-[#aaa]"><MagnetIcon /></Btn>
                    <Btn label="Snap to" className="flex-1 gap-[3px]"><GridSnapIcon /><Chevron /></Btn>
                </Group>
                <Group className="w-[50px]">
                    <Btn label="Overlays" className="w-[24px] bg-[#4772b3]"><OverlayIcon /></Btn>
                    <Btn label="Overlay options" className="flex-1"><Chevron /></Btn>
                </Group>
            </div>
        </div>
        <div className="relative min-h-0 flex-1 overflow-hidden bg-[radial-gradient(#292929_1px,transparent_1px)] bg-size-[46px_42px]">
            <nav className="flex h-[58px] items-center text-[#e0e0e0]">
                <Angle className="h-[9px] w-[6px] text-[#999]" />
                <span className="ml-[17px] flex"><ObjectIcon className="size-5" /></span>
                <a href="#gn" className="ml-[11px]">GN</a>
                <Angle className="ml-[21px] h-[12px] w-[8px]" />
                <span className="ml-[12px] flex"><ParticlesIcon /></span>
                <a href="#modifier" className="ml-[11px]">GeometryNodes</a>
                <Angle className="ml-[20px] h-[12px] w-[8px]" />
                <span className="ml-[12px] flex"><NodeTreeIcon /></span>
                <a href="#tree" className="ml-[11px]">Geometry Nodes</a>
                <Angle className="mr-[2px] ml-auto h-[10px] w-[6px] rotate-180 text-[#999]" />
            </nav>
            <div className="absolute top-[240px] right-0 bottom-0 left-[10px] bg-[#7e7e03]">
                <h2 className="ml-[383px] pt-[9px] text-[27px] leading-8 whitespace-nowrap text-[#c6c6b8]">THE WIGGLE DEORMER</h2>
            </div>
            {frames.map((f) => (
                <div
                    key={f.label}
                    className="absolute rounded-[1px] bg-[#1b1b0d] pt-[7px] text-center text-[8px] leading-[11px] whitespace-nowrap text-[#b4b4aa] shadow-[0_1px_3px_1px_rgba(0,0,0,0.5)]"
                    style={{ left: f.x, top: f.y, width: f.w, height: f.h }}
                >
                    {f.label}
                </div>
            ))}
            <Links />
            {nodes.map((n, i) => (
                <NodeBox key={i} node={n} />
            ))}
            {collapsed.map((c) => (
                <div
                    key={c.label}
                    className="absolute flex h-3 w-[60px] items-center gap-[3px] rounded-full bg-[#83314a] px-[7px] text-[4px] leading-none text-white shadow-[0_1px_3px_rgba(0,0,0,0.6)] outline outline-[#111]"
                    style={{ left: c.x, top: c.y }}
                >
                    <Angle className="h-[4px] w-[3px]" />
                    {c.label}
                    <Socket color={VEC} right />
                    <svg viewBox="0 0 6 4" className="ml-auto h-[4px] w-[6px]" stroke="#b06a80"><path d="M1.500 0v4M4.500 0v4" /></svg>
                </div>
            ))}
            <span className="absolute top-[20px] right-[3px] h-[280px] w-[5px] rounded-full bg-white/10" />
            <span className="absolute right-[76px] bottom-[1px] h-[4px] w-[120px] rounded-full bg-white/10" />
        </div>
    </section>
);

/* ---------- Outliner ---------- */

interface Item {
    name: string;
    icon: React.ReactNode;
    extra?: React.ReactNode;
    muted?: boolean;
    active?: boolean;
}

const items: Item[] = [
    { name: "BezierCurve", icon: <CurveIcon />, extra: <CurveDataIcon />, muted: true },
    {
        name: "Camera",
        icon: <CameraObIcon className="size-5 text-[#c87e48]" />,
        extra: (
            <>
                <AnimIcon />
                <span className="flex size-[25px] items-center justify-center rounded bg-[#4a4f4e]"><CameraDataIcon /></span>
            </>
        ),
    },
    { name: "Effector_Empty", icon: <EmptyIcon /> },
    {
        name: "GN",
        active: true,
        icon: <MeshIcon className="size-5 text-[#e08c54]" />,
        extra: (
            <>
                <AnimIcon />
                <span className="ml-1 flex"><WrenchOutline /></span>
                <MeshDataIcon className="ml-1 size-5 text-[#00d6a3]" />
                <span className="mb-2 ml-1 h-2 w-[3px] rounded-b bg-[#c87e58]" />
            </>
        ),
    },
];

const Outliner = () => (
    <section className="relative flex h-[395px] shrink-0 flex-col overflow-hidden rounded-md bg-[#282828] text-[#c3c3c3]">
        <div className="flex h-[34px] shrink-0 items-center pr-[2px] pb-[2px] pl-[10px] text-[#dedede]">
            <Group className="w-[41px]"><Btn label="Editor type" className="w-full gap-[2px]"><OutlinerIcon /><Chevron /></Btn></Group>
            <Group className="ml-[6px] w-[41px]"><Btn label="Display mode" className="w-full gap-[2px]"><LayersIcon /><Chevron /></Btn></Group>
            <Search label="Search outliner" className="mr-[19px] ml-[19px] min-w-0 flex-1" />
            <Group className="w-[41px]"><Btn label="Filter" className="w-full gap-[4px]"><FilterIcon /><Chevron /></Btn></Group>
        </div>
        <div className="flex h-[26px] items-center gap-[9px] pl-[29px]"><CollectionIcon className="size-[19px] text-[#dcdcdc]" />Scene Collection</div>
        <div className="flex h-[26px] items-center bg-[#2b2b2b] pr-[15px] pl-[33px]">
            <Tri open className="text-[#b0b0b0]" />
            <span className="mr-[6px] ml-[8px] flex size-[25px] items-center justify-center rounded bg-[#5a5a5a] text-[#e6e6e6]"><CollectionIcon className="size-[19px]" /></span>
            Collection
            <svg viewBox="0 0 14 14" className="mr-[9px] ml-auto size-[14px]"><rect width="14" height="14" rx="1" fill="#e6e6e6" /><path d="M3 7.500l3 3 5-6.500" fill="none" stroke="#222" strokeWidth="2" /></svg>
            <span className="flex items-center gap-[8px] text-[#e6e6e6]"><EyeIcon /><PhotoIcon /></span>
        </div>
        <div className="relative">
            {items.map((it, i) => (
                <div key={it.name} className={`flex h-[26px] items-center pr-[15px] pl-[59px] ${it.active ? "bg-[#334d80]" : i % 2 ? "bg-[#2b2b2b]" : ""}`}>
                    <SmallTri className={it.muted ? "text-[#777]" : "text-[#b0b0b0]"} />
                    <span className={`mr-[6px] ml-[8px] flex size-[25px] items-center justify-center rounded ${it.active ? "bg-[#5a6e98]" : ""}`}>{it.icon}</span>
                    <span className={it.active ? "text-[#f5a623]" : it.muted ? "text-[#727272]" : ""}>{it.name}</span>
                    <span className={`ml-auto flex items-center gap-[3px] ${it.muted ? "mr-[28px]" : "mr-[30px]"}`}>{it.extra}</span>
                    <span className="flex items-center gap-[8px] text-[#e6e6e6]">{it.muted ? <EyeShutIcon /> : <EyeIcon />}<PhotoIcon /></span>
                </div>
            ))}
            <span className="absolute top-[5px] bottom-[6px] left-[38px] w-px bg-[#5a5a5a]" />
        </div>
        <span className="mt-auto mb-[2px] ml-[10px] h-[4px] w-[286px] rounded-full bg-[#3c3c3c]" />
    </section>
);

/* ---------- Properties ---------- */

const tabs: { name: string; icon: React.ReactNode; gap?: boolean }[] = [
    { name: "Render", icon: <RenderTab /> },
    { name: "Output", icon: <OutputTab /> },
    { name: "View Layer", icon: <LayersIcon className="size-5 text-[#aaa]" /> },
    { name: "Scene", icon: <SceneIcon className="size-5 text-[#aaa]" /> },
    { name: "World", icon: <WorldTab /> },
    { name: "Collection", icon: <BoxOutlineIcon />, gap: true },
    { name: "Object", icon: <ObjectIcon className="size-5 text-[#c87e48]" />, gap: true },
    { name: "Modifiers", icon: <WrenchIcon className="size-5 text-[#5e8ae0]" /> },
    { name: "Particles", icon: <ParticleTab /> },
    { name: "Physics", icon: <PhysicsTab /> },
    { name: "Constraints", icon: <ConstraintTab /> },
    { name: "Data", icon: <MeshDataIcon className="size-5 text-[#00c695]" /> },
    { name: "Material", icon: <MaterialIcon className="size-5 text-[#bd5159]" /> },
];

const Panel: React.FC<{ title: string; toggle?: boolean; children: React.ReactNode }> = ({ title, toggle, children }) => (
    <section className="rounded bg-[#3d3d3d] pb-[12px]">
        <div className="flex h-[33px] items-center pr-2 pl-[10px]">
            <svg viewBox="0 0 12 8" className="h-[8px] w-[12px]" fill="none" stroke="#a0a0a0" strokeWidth="1.400"><path d="M.5 1l5.500 5.500L11.500 1" /></svg>
            <div className="ml-[5px]">{toggle ? <Check label={title} /> : title}</div>
            <svg viewBox="0 0 16 8" className="ml-auto h-[8px] w-[16px]" fill="#999">
                {[0, 4, 8, 12].map((x) => (
                    <path key={x} d={`M${x + 1} 0h2v2h-2zM${x + 1} 4h2v2h-2z`} />
                ))}
            </svg>
        </div>
        {children}
    </section>
);

const Slider: React.FC<{ label: string; value: string; fill?: number }> = ({ label, value, fill = 0 }) => (
    <label className="flex items-center">
        <span className="w-[96px] text-right">{label}</span>
        <span className="relative ml-[12px] h-6 w-[129px] overflow-hidden rounded bg-[#545454]">
            <span className="absolute inset-y-0 left-0 bg-[#4772b3]" style={{ width: `${fill}%` }} />
            <input defaultValue={value} className="relative h-full w-full bg-transparent text-center" />
        </span>
    </label>
);

const Properties = () => (
    <section className="flex min-h-0 flex-1 flex-col overflow-hidden rounded-md bg-[#303030] text-[#e0e0e0]">
        <div className="flex h-[33px] shrink-0 items-center pr-[11px] pb-px pl-[10px]">
            <Group className="w-[41px]"><Btn label="Editor type" className="w-full gap-[2px]"><PropsIcon /><Chevron /></Btn></Group>
            <Search label="Search properties" className="mr-[61px] ml-[31px] min-w-0 flex-1" />
            <Group className="w-[25px]"><Btn label="Options" className="w-full"><Chevron /></Btn></Group>
        </div>
        <div className="flex min-h-0 flex-1">
            <div className="flex w-[37px] shrink-0 flex-col gap-[2px] bg-[#1d1d1d] pt-[16px] pl-[3px]">
                {tabs.map((t, i) => (
                    <button key={t.name} type="button" aria-label={t.name} className={`flex h-[34px] shrink-0 items-center justify-center rounded-l ${i === 0 ? "bg-[#303030]" : ""} ${t.gap ? "mt-[9px]" : ""}`}>
                        {t.icon}
                    </button>
                ))}
            </div>
            <div className="relative min-w-0 flex-1 overflow-hidden pr-[11px] pl-[10px]">
                <div className="flex h-[46px] items-center gap-[10px] pl-[3px]">
                    <SceneIcon />
                    Scene
                    <button type="button" aria-label="Pin" className="mr-[3px] ml-auto text-[#999]"><PinIcon className="size-[19px]" /></button>
                </div>
                <label className="mt-[10px] mb-[13px] flex items-center whitespace-nowrap">
                    Render Engine
                    <span className="relative ml-[14px] flex min-w-0 flex-1 items-center">
                        <select className="h-[25px] w-full appearance-none rounded border border-[#3d3d3d] bg-[#282828] pl-[9px]">
                            <option>Eevee</option>
                        </select>
                        <Chevron className="pointer-events-none absolute right-[3px] text-[#d9d9d9]" />
                    </span>
                </label>
                <div className="flex flex-col gap-[2px]">
                    <Panel title="Sampling">
                        <div className="mt-[9px] grid grid-cols-[106px_1fr] items-center gap-x-[12px] gap-y-px pr-[11px]">
                            <label htmlFor="render" className="text-right">Render</label>
                            <input id="render" defaultValue="64" className="h-[25px] w-full rounded-t bg-[#545454] text-center" />
                            <label htmlFor="viewport" className="text-right">Viewport</label>
                            <input id="viewport" defaultValue="16" className="h-[25px] w-full rounded-b bg-[#545454] text-center" />
                        </div>
                        <div className="mt-[10px] flex h-[20px] items-center pl-[118px] whitespace-nowrap"><Check label="Viewport Deno..." /></div>
                    </Panel>
                    <Panel title="Ambient Occlusion" toggle>
                        <div className="mt-[10px] flex flex-col gap-[4px] text-nowrap">
                            <Slider label="Distance" value="0.2 m" />
                            <Slider label="Factor" value="5.00" fill={100} />
                            <Slider label="Trace Pre..." value="0.250" fill={23} />
                            <div className="flex h-6 items-center pl-[108px]"><Check label="Bent Normals" /></div>
                            <div className="flex h-6 items-center pl-[108px]"><Check label="Bounces Ap..." /></div>
                        </div>
                    </Panel>
                    <Panel title="Bloom" toggle>
                        <div className="mt-[10px] flex flex-col gap-[4px] text-nowrap">
                            <Slider label="Threshold" value="1.716" fill={16} />
                            <Slider label="Knee" value="0.500" fill={49} />
                        </div>
                    </Panel>
                </div>
                <span className="absolute top-[13px] right-[3px] h-[121px] w-[4px] rounded-full bg-[#484848]" />
            </div>
        </div>
    </section>
);

/* ---------- Status bar ---------- */

const Mouse: React.FC<{ button: "left" | "middle" | "right" }> = ({ button }) => (
    <svg viewBox="0 0 16 20" className="h-[20px] w-[16px]" fill="none" stroke="#999" strokeWidth="1.300">
        <path d="M2 8v6c0 6 12 6 12 0V8M2 7V5c0-2 1-4 4-4h4c3 0 4 2 4 4v2" />
        {button === "left" && <path d="M2 1h5v7H2z" fill="#c0c0c0" stroke="none" />}
        {button === "middle" && <path d="M8 3v6" stroke="#c0c0c0" strokeWidth="3" />}
        {button === "right" && <path d="M9 1h5v7H9z" fill="#c0c0c0" stroke="none" />}
    </svg>
);

const StatusBar = () => (
    <footer className="flex h-[25px] shrink-0 items-center bg-[#1c1c1c] pt-[3px] pr-[16px] pl-[15px] text-[#9c9c9c]">
        <span className="flex w-[281px] items-center gap-[14px]"><Mouse button="left" />Select</span>
        <span className="flex w-[281px] items-center gap-[14px]"><Mouse button="middle" />Pan View</span>
        <span className="flex items-center gap-[14px]"><Mouse button="right" />Select</span>
        <span className="ml-auto text-[#8a8a8a]">3.6.4</span>
    </footer>
);

const App = () => (
    <div className="flex h-screen flex-col overflow-hidden bg-black pt-[29px] pb-[40px] font-['DejaVu_Sans',sans-serif] text-[14px] leading-5">
        <TopBar />
        <main className="grid min-h-0 flex-1 grid-cols-[572px_minmax(0,1fr)_332px] gap-x-[2px] bg-[#141414] pb-px">
            <Viewport />
            <div className="flex min-h-0 min-w-0 flex-col gap-[3px] pr-px">
                <DopeSheet />
                <NodeEditor />
            </div>
            <div className="flex min-h-0 min-w-0 flex-col gap-[3px]">
                <Outliner />
                <Properties />
            </div>
        </main>
        <StatusBar />
    </div>
);

export default App;
